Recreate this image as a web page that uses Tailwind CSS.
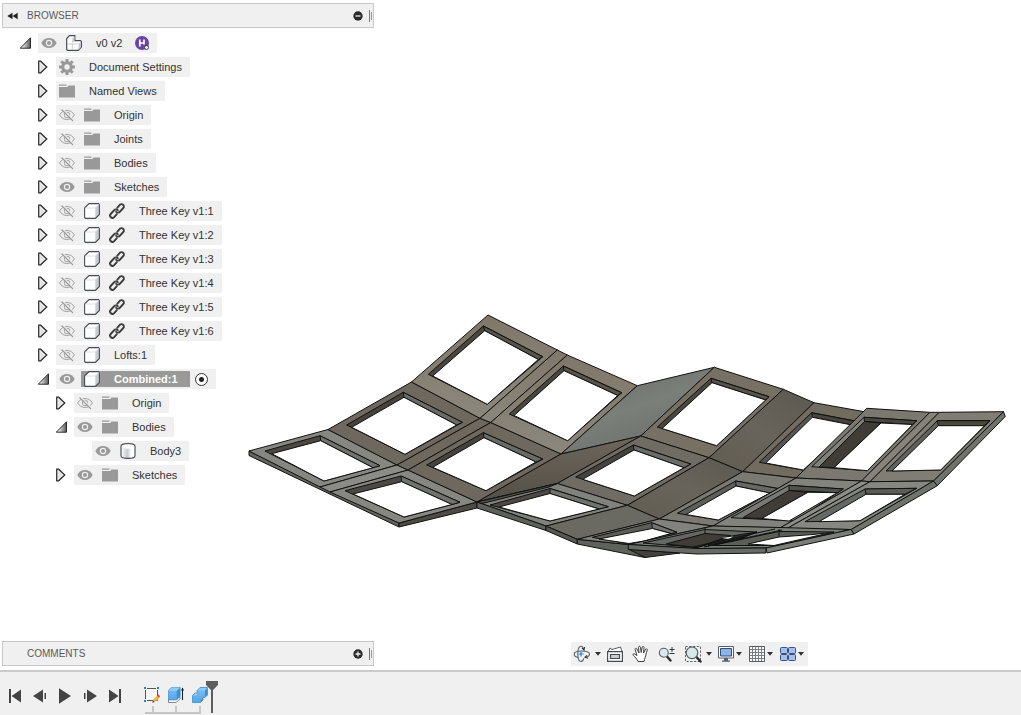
<!DOCTYPE html>
<html lang="en">
  <head>
    <meta charset="UTF-8" />
    <meta name="viewport" content="width=device-width, initial-scale=1.0" />
    <title>v0 v2</title>
    <script src="https://cdn.jsdelivr.net/npm/@tailwindcss/browser@4"></script>
  </head>
  <body class="bg-white font-['Liberation_Sans',Arial,sans-serif] text-[11px] text-[#333]">
    <!-- Shared icons -->
    <svg class="absolute h-0 w-0" aria-hidden="true">
      <defs>
        <linearGradient id="tri" x1="0" y1="0" x2="1" y2="0">
          <stop offset="0.2" stop-color="#f0f0f0" />
          <stop offset="1" stop-color="#555" />
        </linearGradient>
        <linearGradient id="metal" x1="0" y1="0" x2="1" y2="0">
          <stop offset="0" stop-color="#fff" />
          <stop offset="0.45" stop-color="#c9cbd2" />
          <stop offset="0.75" stop-color="#fff" />
        </linearGradient>
        <linearGradient id="blue" x1="0" y1="0" x2="0" y2="1">
          <stop offset="0" stop-color="#7dbdf0" />
          <stop offset="1" stop-color="#58a6e4" />
        </linearGradient>
      </defs>
      <symbol id="closed" viewBox="0 0 12 14">
        <path d="M.7 1.200h2L8.800 7l-6.100 5.800h-2z" fill="#e4e5e8" stroke="#2a2a2a" stroke-width="1.200" />
      </symbol>
      <symbol id="open" viewBox="0 0 12 14">
        <path d="M10.500 1.800v10.400H.3z" fill="url(#tri)" stroke="#2a2a2a" stroke-width="1" />
      </symbol>
      <symbol id="eye" viewBox="0 0 16 16">
        <path d="M.3 8C2 4.800 4.800 3 8 3s6 1.800 7.700 5C14 11.200 11.200 13 8 13S2 11.200.3 8z" fill="#999" />
        <circle cx="8" cy="8" r="3.200" fill="#f0f0f0" />
        <circle cx="8" cy="8" r="2" fill="#999" />
      </symbol>
      <symbol id="eye-off" viewBox="0 0 16 16">
        <g fill="none" stroke="#999" stroke-width=".9">
          <path d="M.6 8C2.400 5 5 3.500 8 3.500S13.600 5 15.400 8c-1.800 3-4.400 4.500-7.400 4.500S2.400 11 .6 8z" />
          <circle cx="8" cy="8" r="2.800" />
          <path d="M3.400 2l11.500 11.500" stroke="#f0f0f0" stroke-width="1.200" />
          <path d="M2.500 2.500l11.500 11.500" stroke-width="1.100" />
        </g>
      </symbol>
      <symbol id="folder" viewBox="0 0 16 16">
        <path d="M0 1.500h7.500v1.300H0zM0 4h8.300l1.200-1.500H16v12H0z" fill="#999" />
      </symbol>
      <symbol id="box" viewBox="0 0 16 16">
        <path d="M1 5l4.500-4h10v10.500L11.500 15.500H2.500L1 14z" fill="#fff" />
        <path d="M11.300 5l4-4v10.500l-4 4z" fill="#c9cbd3" />
        <path d="M.6 5L5 .6h9.600l.8.800v10l-4 4H1.400l-.8-.8z" fill="none" stroke="#484b52" stroke-width="1.100" />
        <path d="M1.200 5h10.100l3.700-3.700" fill="none" stroke="#d5d7dd" stroke-width=".8" />
      </symbol>
      <symbol id="assembly" viewBox="0 0 16 16">
        <path d="M.7 3.500L3.500.7h5.300v5h5.700l1 1v5.200l-3.300 3.500H1.500L.7 14.500z" fill="#fff" stroke="#484b52" stroke-width="1.200" />
        <path d="M6.300 3.500L8.500 1.200V6L6.300 8.500zM12.500 9L15 6.500V12l-2.500 2.700z" fill="#c9cbd2" />
        <path d="M1.300 9h5v5.800M6.300 9h6" fill="none" stroke="#c3c6cd" stroke-width=".8" />
      </symbol>
      <symbol id="cylinder" viewBox="0 0 16 16">
        <path d="M1 3.300C1 1.800 3 .6 8 .6s7 1.200 7 2.700v9.400c0 1.500-2 2.700-7 2.700s-7-1.200-7-2.700z" fill="url(#metal)" stroke="#43464d" stroke-width="1.100" />
        <ellipse cx="8" cy="3.500" rx="6.200" ry="2.200" fill="#fff" />
      </symbol>
      <symbol id="link" viewBox="0 0 16 16">
        <g fill="none" stroke="#3c3c3c" stroke-width="1.900" stroke-linecap="round">
          <path d="M8.200 4.800l2.600-2.900a2.300 2.300 0 0 1 3.500 3.100L11 8.700a2.500 2.500 0 0 1-3.800.1" />
          <path d="M7.800 11.200l-2.600 2.900A2.300 2.300 0 0 1 1.700 11L5 7.300a2.500 2.500 0 0 1 3.800-.1" />
        </g>
      </symbol>
      <symbol id="gear" viewBox="0 0 16 16">
        <circle cx="8" cy="8" r="4.300" fill="none" stroke="#999" stroke-width="3.200" />
        <path d="M8 0v3M8 13v3M0 8h3M13 8h3M2.300 2.300l2.200 2.200M11.500 11.500l2.200 2.200M13.700 2.300l-2.200 2.200M4.500 11.500l-2.200 2.200" stroke="#999" stroke-width="3" />
      </symbol>
      <symbol id="caret" viewBox="0 0 8 8">
        <path d="M1 2h6L4 5.800z" fill="#303030" />
      </symbol>
    </svg>

    <div class="flex h-screen flex-col">
      <main class="relative flex min-h-0 flex-1 flex-col justify-between overflow-hidden">
        <!-- Model canvas -->
        <svg class="absolute inset-0 h-full w-full" viewBox="0 0 1021 670" preserveAspectRatio="xMinYMin meet" role="img" aria-label="Combined:1 model">
          <defs>
            <linearGradient id="loft-a" x1="0" y1="0" x2="0.6" y2="1">
              <stop offset="0" stop-color="#666862" />
              <stop offset="0.55" stop-color="#7b7f7a" />
              <stop offset="1" stop-color="#6b6e6a" />
            </linearGradient>
            <linearGradient id="loft-b" x1="0" y1="0" x2="0" y2="1">
              <stop offset="0" stop-color="#6d665b" />
              <stop offset="1" stop-color="#544f47" />
            </linearGradient>
            <linearGradient id="loft-c" x1="0" y1="1" x2="1" y2="0">
              <stop offset="0" stop-color="#625d53" />
              <stop offset="0.5" stop-color="#68645b" />
              <stop offset="1" stop-color="#5b5850" />
            </linearGradient>
            <linearGradient id="tan" x1="0" y1="0" x2="0" y2="1">
              <stop offset="0" stop-color="#7f7869" />
              <stop offset="1" stop-color="#8c877d" />
            </linearGradient>
          </defs>
          <g stroke="#111" stroke-width="1" stroke-linejoin="round">
            <!-- left lower frames -->
            <g fill="#63655f">
              <path d="M249 451L399 523V527L249 455.500z" />
              <path d="M399 523L477 502V508L399 527z" fill="#4c4b44" />
            </g>
            <path d="M249 451L328 429.500L397 465L320 487z" fill="#858780" />
            <path d="M320 487L397 465L408 470L330 492z" fill="#8a8c85" />
            <path d="M330 492L408 470L477 502L399 523z" fill="#858780" />
            <path d="M265 451L320 435.700L380 465.700L324 481z" fill="#4b4942" />
            <path d="M320 435.700L380 465.700L373 467.700L320.700 440.700z" fill="#70736d" />
            <path d="M271.700 453.700L320.700 440.700L373 467.700L324 481z" fill="#fff" />
            <path d="M345 490.700L401 476L460 502.300L404 517z" fill="#4b4942" />
            <path d="M401 476L460 502.300L452 504.500L401.700 481.700z" fill="#70736d" />
            <path d="M353 494L401.700 481.700L452 504.500L404 517z" fill="#fff" />

            <!-- left middle frames -->
            <g fill="#6f685e">
              <path d="M328 429.500L411.500 382L480 418.300L397 465z" />
              <path d="M397 465L480 418.300L490.700 422.500L408 470z" />
              <path d="M408 470L490.700 422.500L561 454L477 502z" />
            </g>
            <path d="M346.700 425L403.300 392.300L462.300 422.300L405 454.300z" fill="#46433c" />
            <path d="M403.300 392.300L462.300 422.300L456.700 425L404 397.300z" fill="#696c66" />
            <path d="M351.700 427.300L404 397.300L456.700 425L405 454.300z" fill="#fff" />
            <path d="M426.700 465L483.300 432.700L542.700 459L486 490.700z" fill="#46433c" />
            <path d="M483.300 432.700L542.700 459L536 462L484 437.700z" fill="#696c66" />
            <path d="M432.700 467.300L484 437.700L536 462L486 490.700z" fill="#fff" />

            <!-- left upper frames -->
            <g fill="url(#tan)">
              <path d="M411.500 382L488 315L557.300 350L480 418.300z" />
              <path d="M480 418.300L557.300 350L567.300 355L490.700 422.500z" />
              <path d="M490.700 422.500L567.300 355L637.300 385.700L561 454z" />
            </g>
            <path d="M428.300 374.300L483.300 326L542.700 356.700L487.300 404.300z" fill="#49463e" />
            <path d="M483.300 326L542.700 356.700L538.300 359.500L484.700 330.700z" fill="#56544b" />
            <path d="M432.700 376L484.700 330.700L538.300 359.500L487.300 404.300z" fill="#fff" />
            <path d="M509.300 414L563.300 366L621.700 392.700L567.700 440.700z" fill="#49463e" />
            <path d="M563.300 366L621.700 392.700L617.700 395.500L564 370.700z" fill="#56544b" />
            <path d="M514 415.500L564 370.700L617.700 395.500L567.700 440.700z" fill="#fff" />

            <!-- lofts between the halves -->
            <path d="M561 454L637.300 385.700L714.300 367.300L640.700 436z" fill="url(#loft-a)" />
            <path d="M561 454L640.700 436L557.300 483.500L477 502z" fill="url(#loft-b)" />

            <!-- centre frames -->
            <path d="M640.700 436L714.300 367.300L783.300 389.300L709 457.700z" fill="#777165" />
            <path d="M657.300 427L711 378.300L769 396.700L716.700 445.700z" fill="#49463e" />
            <path d="M711 378.300L769 396.700L765.700 400L712 382.700z" fill="#56544b" />
            <path d="M662 428.500L712 382.700L765.700 400L716.700 445.700z" fill="#fff" />
            <path d="M557.300 483.500L640.700 436L709 457.700L627.300 505.300z" fill="#716c63" />
            <path d="M575.700 477L633.300 445L690.700 464L634.300 496z" fill="#46433c" />
            <path d="M633.300 445L690.700 464L684 467.700L634 450z" fill="#6a6d67" />
            <path d="M582.700 479.300L634 450L684 467.700L634.300 496z" fill="#fff" />
            <path d="M477 502L557.300 483.500L627.300 505.300L546 526z" fill="#80827b" />
            <path d="M477 502L546 526V530.500L477 508z" fill="#5e605a" />
            <path d="M490 505L550 488.500L608.300 506.700L550 521z" fill="#4b4942" />
            <path d="M550 488.500L608.300 506.700L599 509L550 493.500z" fill="#70736d" />
            <path d="M499 507L550 493.500L599 509L550 521z" fill="#fff" />
            <path d="M477 502L557.300 483.500L549 487L482 503.500z" fill="#50514b" />

            <!-- centre lofts -->
            <path d="M709 457.700L783.300 389.300L814 402.700L742.700 471.700z" fill="url(#loft-c)" />
            <path d="M627.300 505.300L709 457.700L742.700 471.700L659.300 519z" fill="url(#loft-c)" />
            <path d="M546 526L627.300 505.300L659.300 519L577.300 539.300z" fill="#6a6a63" />
            <path d="M546 526L577.300 539.300V544L546 530.500z" fill="#555750" />

            <!-- right of centre -->
            <path d="M742.700 471.700L814 402.700L866 412L796 478z" fill="#716b60" />
            <path d="M759.300 462.300L811.700 412.700L860 422L803.300 470z" fill="#55564f" />
            <path d="M811.700 412.700L860 422L852 425L812.300 417.300z" fill="#45433d" />
            <path d="M765.700 463L812.300 417.300L852 425L803.300 470z" fill="#fff" />
            <path d="M659.300 519L742.700 471.700L796 478L713 526z" fill="#7a7a72" />
            <path d="M677.300 513.300L735.700 481L778 488.500L718.300 520z" fill="#5c5e58" />
            <path d="M735.700 481L778 488.500L770 493L736 486z" fill="#666963" />
            <path d="M686 514.500L736 486L770 493L718.300 520z" fill="#fff" />

            <!-- front row -->
            <path d="M577.300 539.300L628.300 544.500L645 557.500L577.300 544z" fill="#5f615b" />
            <path d="M628.300 549L680 553L645 557.500z" fill="#45413a" />
            <path d="M577.300 539.300L659.300 519L713 526L628.300 544.500z" fill="#80827b" />
            <path d="M592.300 537.300L651.700 522.700L677 532.300L629 544z" fill="#5c5d57" />
            <path d="M651.700 522.700L677 532.300L671 533.500L652.300 528.500z" fill="#70736d" />
            <path d="M599 539L652.300 528.500L671 533.500L644 541L629 543.500z" fill="#fff" />

            <!-- right upper frames -->
            <path d="M796 478L866.700 408.300L930 412.300L861.500 481z" fill="#7b796f" />
            <path d="M811.700 466.700L864 417.300L916.700 420.700L867.300 470.700z" fill="#7f817a" />
            <path d="M864 417.300L916.700 420.700L912.700 424.500L864.500 421.500z" fill="#49473e" />
            <path d="M819 467L864.500 421.500L881 423L834 467.700z" fill="#403c36" />
            <path d="M834 467.700L881 423L912.700 424.500L867.300 470.700z" fill="#fff" />
            <path d="M861.500 481L930 412.300H939.300L870 481.700z" fill="#85837a" />
            <path d="M1003.500 411.700L1005.300 416.500L937.300 485.700L933.300 481z" fill="#70736c" />
            <path d="M870 481.700L939.300 412.300L1003.500 411.700L933.300 481z" fill="#7f7d74" />
            <path d="M886 471L937.300 420.700H990L940.700 470z" fill="#60625b" />
            <path d="M937.300 420.700H990L984 425.700H938.300z" fill="#4a493c" />
            <path d="M892 471L938.300 425.700H984.500L940.700 470z" fill="#fff" />

            <!-- right middle frames -->
            <path d="M713 526L796 478L861.500 481L780 528z" fill="#81837c" />
            <path d="M731 517.700L789 485.300L843.300 489L795 521z" fill="#777a74" />
            <path d="M789 485.300L843.300 489L837.300 492.700L789 490.500z" fill="#50524c" />
            <path d="M743 517.700L789 490.500L808 492.300L761.700 518.500z" fill="#403c36" />
            <path d="M761.700 518.500L808 492.300L837.300 492.700L789 521z" fill="#fff" />
            <path d="M780 528L861.500 481L870 481.700L787 528.500z" fill="#8b8d86" />
            <path d="M933.300 481L937.300 485.700L854 534L851 529.500z" fill="#70736c" />
            <path d="M787 528.500L870 481.700L933.300 481L851 529.500z" fill="#858780" />
            <path d="M805 521.700L865 489L916.700 488.300L860 520.700z" fill="#666963" />
            <path d="M865 489L916.700 488.300L905 494.300H866z" fill="#5b5d56" />
            <path d="M819 521.700L866 494.300H905L860 520.700z" fill="#fff" />

            <!-- right front edge -->
            <path d="M628.300 544.500L713 526L780 527.500L851 529.500L766 548L697 548.500z" fill="#7a7d76" />
            <path d="M628.300 544.500L697 548.500L766 548V553L697 554L628.300 549.500z" fill="#686b65" />
            <path d="M766 548L851 529.500L854 534L767 553z" fill="#7b7e77" />
            <path d="M643 543L705 529.500L757 532L697 547.500z" fill="#666963" />
            <path d="M666 544L705 533.500L731 535.500L697 547.500z" fill="#403c36" />
            <path d="M716 541L732 536L757 532L740 539L708 546z" fill="#302f2b" />
            <path d="M722 538L733 536.500L729 539z" fill="#fff" stroke="none" />
            <path d="M712 545.500L779 531.500L834 532L774 545.500z" fill="#5b5d57" />
            <path d="M748 544L779 537L813 534.500L831 532.500L774 545.500z" fill="#fff" />
            <path d="M705 527V533M779 529V537M693 547L775 529M704 547L782 530M714 544L745 537" fill="none" />
          </g>
        </svg>

        <section class="relative ml-[2px] mt-[3px] w-[372px]" aria-label="Browser">
          <header class="flex h-[25px] items-center border border-[#c8c8c8] bg-[#f0f0f0] pl-1">
            <button class="w-5" aria-label="Collapse panel">
              <svg class="h-3 w-3" viewBox="0 0 12 12"><path d="M5.500 2.800v6.400L.3 6zM10.700 2.800v6.400L5.500 6z" fill="#222" /></svg>
            </button>
            <h2 class="flex-1 text-[10px] text-[#5a5a5a]">BROWSER</h2>
            <button aria-label="Minimize browser">
              <svg class="h-[10px] w-[10px]" viewBox="0 0 10 10"><circle cx="5" cy="5" r="4.700" fill="#2b2b2b" /><path d="M2.500 5h5" stroke="#f0f0f0" stroke-width="1.300" /></svg>
            </button>
            <span class="ml-[6px] mr-px flex items-center gap-px"><i class="h-3 w-px bg-[#777]"></i><i class="h-2 w-px bg-[#999]"></i></span>
          </header>
          <ul id="tree" class="ml-[18px] mt-[5px] whitespace-nowrap"></ul>
        </section>

        <div class="relative mb-1 ml-[2px] flex items-end">
          <section class="flex h-[25px] w-[372px] items-center border border-[#c8c8c8] bg-[#f0f0f0] pl-6">
            <h2 class="flex-1 text-[10px] text-[#5a5a5a]">COMMENTS</h2>
            <button aria-label="Add comment">
              <svg class="h-[10px] w-[10px]" viewBox="0 0 10 10"><circle cx="5" cy="5" r="4.700" fill="#2b2b2b" /><path d="M2.500 5h5M5 2.500v5" stroke="#f0f0f0" stroke-width="1.300" /></svg>
            </button>
            <span class="ml-[6px] mr-px flex items-center gap-px"><i class="h-3 w-px bg-[#777]"></i><i class="h-2 w-px bg-[#999]"></i></span>
          </section>

          <!-- Navigation bar -->
          <nav class="ml-[197px] flex h-6 items-center gap-1 bg-[#f0f0f0] pl-[2px] pr-[3px]" aria-label="View controls">
            <button class="flex items-center gap-[3px]" aria-label="Orbit">
              <svg class="h-[18px] w-[18px]" viewBox="0 0 18 18" fill="none">
                <path d="M5.500 12.500C3 12 1.200 10.700 1.200 9.200c0-2 3.300-3.200 7.300-3.200 4.500 0 8 1.300 8 3.200 0 1.500-1.800 2.500-4 3" stroke="#5f6268" stroke-width="1.100" />
                <path d="M10.800 4.500c-.5-2-1.500-3.200-2.800-3.200-2 0-3.200 3.500-3.200 7.500s1.200 7.700 3.200 7.700c1.300 0 2.300-1.200 2.800-3.200" stroke="#5f6268" stroke-width="1.100" />
                <path d="M9 2.800l2 2.200.6-3M15 13.300l-3-1 2-2" stroke="#33363c" stroke-width="1.100" />
                <path d="M8 6.500v5M5.500 9h5" stroke="#1883d7" stroke-width="1.200" />
              </svg>
              <svg class="h-2 w-2"><use href="#caret" /></svg>
            </button>
            <button aria-label="Look at">
              <svg class="block h-[18px] w-[18px]" viewBox="0 0 18 18">
                <path d="M2 6.500L4 3l2 1.500L14.500 2 16 6.500z" fill="#fff" stroke="#5a5d63" stroke-width="1" />
                <path d="M1.600 6.600h14.800v9.800H1.600z" fill="#fff" stroke="#484b52" stroke-width="1.200" />
                <path d="M4.500 9.500h9v4h-9z" fill="#c9ccd2" stroke="#484b52" stroke-width="1.200" />
              </svg>
            </button>
            <button class="ml-1" aria-label="Pan">
              <svg class="block h-[18px] w-[18px]" viewBox="0 0 18 18">
                <path d="M6 16.500C5.500 14.500 3 12 1.200 10.200c-.7-1 .5-1.900 1.500-1.200L5 10.600 3.200 4.500c-.3-1.300 1.200-1.700 1.700-.6L7 8 6.500 2.300c0-1.300 1.700-1.400 1.900-.1L9.200 7.500l1-5.300c.3-1.200 1.900-.9 1.800.3L11.600 8l2-3.700c.6-1 2-.3 1.600.8-1 3-1.400 5.500-2 7.400-.4 1.200-1 2.300-1.200 4z" fill="#fff" stroke="#3c3e43" stroke-width="1" stroke-linejoin="round" />
              </svg>
            </button>
            <button class="ml-1" aria-label="Zoom">
              <svg class="block h-[18px] w-[18px]" viewBox="0 0 18 18">
                <path d="M9 11.500l3.500 4" stroke="#2b2b2b" stroke-width="2.400" stroke-linecap="round" />
                <circle cx="5.800" cy="7.800" r="4.500" fill="#d6e9ee" stroke="#5a5d63" stroke-width="1.100" />
                <path d="M11.500 4.500h5M14 2v5M11.500 8.500h5" stroke="#33363c" stroke-width="1" />
              </svg>
            </button>
            <button class="ml-1 flex items-center gap-[3px]" aria-label="Zoom window">
              <svg class="h-[18px] w-[18px]" viewBox="0 0 18 18">
                <path d="M1.500 1.500h15v15h-15z" fill="none" stroke="#5a5d63" stroke-width="1" stroke-dasharray="2.200 1.600" />
                <path d="M12 11.500l4.500 5" stroke="#2b2b2b" stroke-width="2.400" stroke-linecap="round" />
                <circle cx="8" cy="7.800" r="5.800" fill="#d6e9ea" stroke="#5a5d63" stroke-width="1.200" />
              </svg>
              <svg class="h-2 w-2"><use href="#caret" /></svg>
            </button>
            <button class="flex items-center" aria-label="Display settings">
              <svg class="h-[18px] w-[18px]" viewBox="0 0 18 18">
                <path d="M1.500 1.500h15v11.500h-15z" fill="#fff" stroke="#5a5d63" stroke-width="1" />
                <path d="M3.500 3.500h11v7.500h-11z" fill="#8fb4e3" stroke="#2e4e86" stroke-width="1" />
                <path d="M7 13h4v2.500h2v1.300H5v-1.300h2z" fill="#5a5d63" />
              </svg>
              <svg class="h-2 w-2"><use href="#caret" /></svg>
            </button>
            <button class="ml-px flex items-center" aria-label="Grid and snaps">
              <svg class="h-[18px] w-[18px]" viewBox="0 0 18 18">
                <path d="M1.500 1.500h15v15h-15z" fill="#fff" />
                <path d="M4.500 1v16M7.500 1v16M10.500 1v16M13.500 1v16M1 4.500h16M1 7.500h16M1 10.500h16M1 13.500h16" stroke="#7a7d84" stroke-width="1" />
                <path d="M1.500 1.500h15v15h-15z" fill="none" stroke="#5a5d63" />
              </svg>
              <svg class="h-2 w-2"><use href="#caret" /></svg>
            </button>
            <button class="ml-px flex items-center" aria-label="Viewports">
              <svg class="h-[18px] w-[18px]" viewBox="0 0 18 18" fill="#a3c1ea" stroke="#3a5180" stroke-width="1">
                <rect x="1.500" y="2.500" width="7" height="6" rx="1" />
                <rect x="9.500" y="2.500" width="7" height="6" rx="1" />
                <rect x="1.500" y="9.500" width="7" height="6" rx="1" />
                <rect x="9.500" y="9.500" width="7" height="6" rx="1" />
              </svg>
              <svg class="h-2 w-2"><use href="#caret" /></svg>
            </button>
          </nav>
        </div>
      </main>

      <!-- Timeline -->
      <footer class="flex h-[45px] items-start border-t-2 border-[#cbcbcb] bg-[#f0f0f0] pl-[7px] pt-[15px]">
        <div class="flex gap-[9px] pt-px">
          <button aria-label="Go to start"><svg class="block h-4 w-4" viewBox="0 0 16 16" fill="#444"><path d="M2 1h2v14H2zM14 1.500v13L4.500 8z" /></svg></button>
          <button aria-label="Step back"><svg class="block h-4 w-4" viewBox="0 0 16 16" fill="#444"><path d="M11 1.500v13L1 8zM12.500 5h1.500v6h-1.500z" /></svg></button>
          <button aria-label="Play"><svg class="block h-4 w-4" viewBox="0 0 16 16" fill="#444"><path d="M2 .3v15.400L14 8z" /></svg></button>
          <button aria-label="Step forward"><svg class="block h-4 w-4" viewBox="0 0 16 16" fill="#444"><path d="M5 1.500v13L15 8zM2 5h1.500v6H2z" /></svg></button>
          <button aria-label="Go to end"><svg class="block h-4 w-4" viewBox="0 0 16 16" fill="#444"><path d="M12 1h2v14h-2zM2 1.500v13L11.500 8z" /></svg></button>
        </div>
        <div class="relative ml-[21px]">
          <div class="flex gap-2">
            <button aria-label="Sketch">
              <svg class="block h-4 w-4" viewBox="0 0 16 16">
                <path d="M1.500 1.500h12v12h-12z" fill="#f7f7f7" stroke="#555" stroke-width="1" />
                <path d="M0 0h3v3H0zM12 0h3v3h-3zM0 12h3v3H0z" fill="#f0f0f0" />
                <path d="M0 0h2v2H0zM13 0h2v2h-2zM0 13h2v2H0z" fill="#1a86dc" />
                <path d="M8.500 15.500l1-3.300 4-4 2.200 2.300-4 4z" fill="#f6b73c" />
                <path d="M13 8.500l1.300-1.200 1.700 2-1.200 1.200z" fill="#e33b35" />
                <path d="M8.300 15.700l.7-2.200 1.600 1.500z" fill="#444" />
              </svg>
            </button>
            <button aria-label="Extrude">
              <svg class="block h-4 w-4" viewBox="0 0 16 16">
                <path d="M.5 12.500v3H8l4-3.500v-2z" fill="#fff" stroke="#888" stroke-width="1" />
                <path d="M0 4L3.500.3h8.700v9L8.500 13H1l-1-1z" fill="url(#blue)" stroke="#3a8fd0" stroke-width=".7" />
                <path d="M.5 4L3.700.8h8L8.500 4z" fill="#8fcaf5" />
                <path d="M8.700 4L12 1v8.200l-3.300 3.300z" fill="#3f8fd0" />
                <path d="M14.500 1v12" stroke="#222" stroke-width="1.100" />
                <path d="M13 3.500L14.500.5 16 3.500z" fill="#222" />
              </svg>
            </button>
            <button aria-label="Combine">
              <svg class="block h-4 w-4" viewBox="0 0 16 16">
                <path d="M.5 8.500L3 6h2V3.500L8 .5h7.500V8L13 10.500h-2V13l-2.500 2.500h-8z" fill="url(#blue)" stroke="#3a8fd0" stroke-width=".8" />
                <path d="M5.500 3.500L8.200 1h7L13 3.500zM1 8.500l2.200-2.200H5v2.200z" fill="#8fcaf5" />
                <path d="M13 3.500L15.200 1v7L13 10zM8.500 13.500L11 11v2l-2.500 2.300z" fill="#3f8fd0" />
              </svg>
            </button>
          </div>
          <svg class="mt-[3px] block h-2 w-[57px]" viewBox="0 0 57 8" aria-hidden="true"><path d="M1 7h56M9 0v7M32 0v7M56 0v7" fill="none" stroke="#c6c6c6" stroke-width="2" /></svg>
          <!-- playhead -->
          <svg class="absolute -top-[6px] left-[62px] h-8 w-3" viewBox="0 0 12 32" role="img" aria-label="Timeline marker"><path d="M0 0h12v4L7 9v23H5V9L0 4z" fill="#5e5e5e" /></svg>
        </div>
      </footer>
    </div>

    <script>
      const tree = [
        {
          name: "v0 v2", arrow: "open", eye: "eye", icons: ["assembly"], badge: true,
          children: [
            { name: "Document Settings", arrow: "closed", icons: ["gear"] },
            { name: "Named Views", arrow: "closed", icons: ["folder"] },
            { name: "Origin", arrow: "closed", eye: "eye-off", icons: ["folder"] },
            { name: "Joints", arrow: "closed", eye: "eye-off", icons: ["folder"] },
            { name: "Bodies", arrow: "closed", eye: "eye-off", icons: ["folder"] },
            { name: "Sketches", arrow: "closed", eye: "eye", icons: ["folder"] },
            { name: "Three Key v1:1", arrow: "closed", eye: "eye-off", icons: ["box", "link"] },
            { name: "Three Key v1:2", arrow: "closed", eye: "eye-off", icons: ["box", "link"] },
            { name: "Three Key v1:3", arrow: "closed", eye: "eye-off", icons: ["box", "link"] },
            { name: "Three Key v1:4", arrow: "closed", eye: "eye-off", icons: ["box", "link"] },
            { name: "Three Key v1:5", arrow: "closed", eye: "eye-off", icons: ["box", "link"] },
            { name: "Three Key v1:6", arrow: "closed", eye: "eye-off", icons: ["box", "link"] },
            { name: "Lofts:1", arrow: "closed", eye: "eye-off", icons: ["box"] },
            {
              name: "Combined:1", arrow: "open", eye: "eye", icons: ["box"], active: true,
              children: [
                { name: "Origin", arrow: "closed", eye: "eye-off", icons: ["folder"] },
                {
                  name: "Bodies", arrow: "open", eye: "eye", icons: ["folder"],
                  children: [{ name: "Body3", eye: "eye", icons: ["cylinder"] }],
                },
                { name: "Sketches", arrow: "closed", eye: "eye", icons: ["folder"] },
              ],
            },
          ],
        },
      ];

      const badge = `
        <svg class="ml-1 h-[14px] w-[14px]" viewBox="0 0 14 14">
          <circle cx="7" cy="7" r="7" fill="#6a43a8" />
          <path d="M4.800 3.500v7M9 3.500v5M4.800 7H9" stroke="#fff" stroke-width="1.700" />
          <circle cx="11.500" cy="11.500" r="2" fill="#fff" stroke="#333" stroke-width=".9" />
        </svg>`;

      function icon(id) {
        return `<svg class="block h-4 w-4"><use href="#${id}" /></svg>`;
      }

      function row(node) {
        const arrow = node.arrow
          ? `<button class="w-[18px]" aria-label="Toggle ${node.name}"><svg class="h-[14px] w-3"><use href="#${node.arrow}" /></svg></button>`
          : `<span class="w-[18px]"></span>`;
        const eye = node.eye
          ? `<button aria-label="Visibility of ${node.name}">${icon(node.eye)}</button>`
          : "";
        const icons = node.icons.map(icon).join("");

        if (node.active) {
          return `<div class="mb-1 flex h-5">${arrow}
            <div class="flex items-center bg-[#f0f0f0] pl-[3px] pr-2">${eye}
              <div class="ml-[6px] flex h-4 items-center gap-[14px] bg-[#999] pl-[3px] pr-3 font-bold text-white">${icons}<span>${node.name}</span></div>
              <input type="radio" name="active" checked aria-label="Activate ${node.name}" class="ml-[5px] h-[13px] w-[13px] appearance-none rounded-full border border-[#333] bg-[radial-gradient(#222_2px,#fff_3px)]" />
            </div></div>`;
        }
        return `<div class="mb-1 flex h-5">${arrow}
          <div class="flex items-center gap-[9px] bg-[#f0f0f0] pl-[3px] pr-2">${eye}${icons}
            <span class="ml-[5px]">${node.name}</span>${node.badge ? badge : ""}
          </div></div>`;
      }

      function render(nodes) {
        return nodes
          .map((node) => `<li>${row(node)}${node.children ? `<ul class="ml-[18px]">${render(node.children)}</ul>` : ""}</li>`)
          .join("");
      }

      document.getElementById("tree").innerHTML = render(tree);
    </script>
  </body>
</html>
